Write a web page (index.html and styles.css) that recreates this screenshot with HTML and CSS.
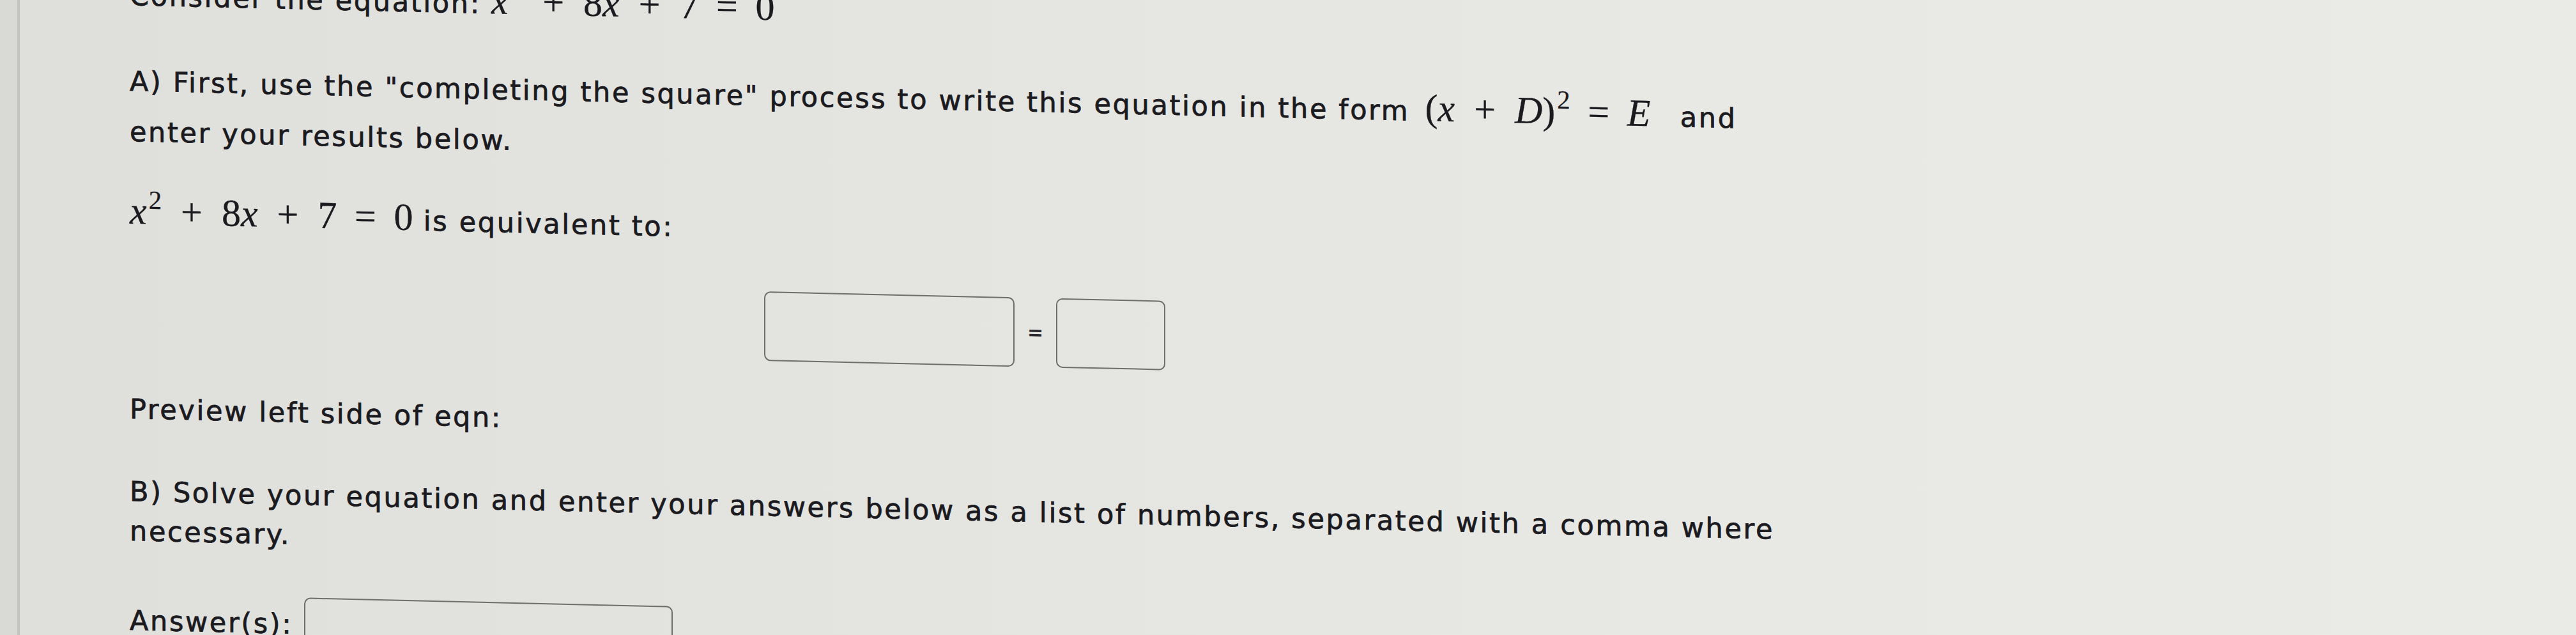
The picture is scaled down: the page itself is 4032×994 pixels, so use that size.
FILE: index.html
```html
<!DOCTYPE html>
<html lang="en">
<head>
<meta charset="utf-8">
<title>Completing the square</title>
<link rel="stylesheet" href="styles.css">
</head>
<body>
<div class="screen">
  <div class="gutter"></div>
  <main class="content">
    <div class="question">
      <p class="intro">Consider the equation: <span class="math"><i>x</i><sup>2</sup><span class="op">+</span>8<i>x</i><span class="op">+</span>7<span class="rel">=</span>0</span></p>
      <p class="text">A) First, use the "completing the square" process to write this equation in the form <span class="math math-deep">(<i>x</i><span class="op">+</span><i>D</i>)<sup>2</sup><span class="rel">=</span><i>E</i></span> and enter your results below.</p>
      <p class="text"><span class="math"><i>x</i><sup>2</sup><span class="op">+</span>8<i>x</i><span class="op">+</span>7<span class="rel">=</span>0</span> is equivalent to:</p>
      <div class="eqrow">
        <input class="box box-wide" type="text" aria-label="left side">
        <span class="eqsign">=</span>
        <input class="box box-small" type="text" aria-label="right side">
      </div>
      <p class="text">Preview left side of eqn:</p>
      <p class="text">B) Solve your equation and enter your answers below as a list of numbers, separated with a comma where necessary.</p>
      <div class="answer">
        <span class="text answer-label">Answer(s):</span>
        <input class="box box-answer" type="text" aria-label="answers">
      </div>
    </div>
  </main>
</div>
</body>
</html>
```

FILE: styles.css
```css
* { box-sizing: border-box; }

html, body {
  margin: 0;
  padding: 0;
}

body {
  width: 4032px;
  height: 994px;
  overflow: hidden;
  background: linear-gradient(to right, #dfdfdb 0%, #e3e3df 30%, #e8e8e4 65%, #eaeae6 100%);
  font-family: "DejaVu Sans", Verdana, sans-serif;
  color: #1a1a1f;
}

.screen {
  display: flex;
  height: 994px;
}

.gutter {
  width: 31px;
  flex: none;
  background: #d9d9d5;
  border-right: 4px solid #c3c3bf;
}

.content {
  flex: none;
  padding-left: 172px;
}

.question {
  width: 2614px;
  margin-top: -38px;
  display: flex;
  flex-direction: column;
  gap: 67px;
  transform: skewY(1.33deg);
  transform-origin: 0 0;
}

.question p { margin: 0; }

.text, .intro {
  font-size: 43px;
  line-height: 62px;
  letter-spacing: 2.65px;
  -webkit-text-stroke: 0.75px currentColor;
}

.intro { margin-bottom: 18px; }

.math {
  font-family: "Liberation Serif", "Times New Roman", serif;
  font-size: 60px;
  line-height: 0;
  letter-spacing: 0;
  white-space: nowrap;
  -webkit-text-stroke: 0.3px currentColor;
}

.math-deep {
  display: inline-block;
  line-height: 62px;
  padding-bottom: 22px;
  margin-left: 8px;
  margin-right: 30px;
}

.math i { font-style: italic; }

.math sup {
  font-size: 0.68em;
  line-height: 0;
  vertical-align: 0.58em;
  margin-left: 3px;
}

.math .op { margin: 0 0.5em; }
.math .rel { margin: 0 0.46em; }

.eqrow {
  display: flex;
  align-items: center;
  justify-content: center;
  gap: 20px;
  height: 109px;
}

.box {
  display: block;
  height: 109px;
  border: 2.5px solid #6e6e6c;
  border-radius: 10px;
  background: transparent;
  outline: none;
  padding: 0;
  margin: 0;
  font: inherit;
}

.box-wide { width: 392px; }
.box-small { width: 171px; }

.eqsign {
  font-family: "DejaVu Sans", sans-serif;
  font-weight: bold;
  font-size: 30px;
  line-height: 30px;
  color: #2a2a2e;
}

.answer {
  display: flex;
  align-items: flex-start;
  gap: 18px;
}

.answer-label { margin-top: 11px; }

.box-answer {
  width: 577px;
  height: 100px;
}
```
